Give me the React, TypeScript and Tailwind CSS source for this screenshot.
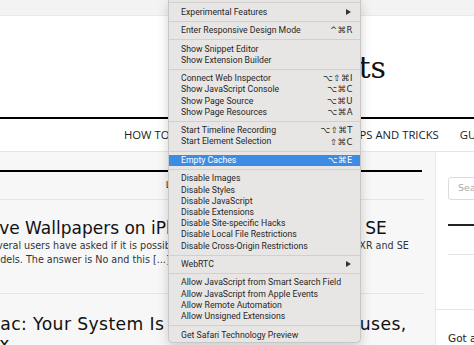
import React from 'react'

type Item = { label: string; keys?: string; arrow?: boolean; active?: boolean } | 'sep'

const menuItems: Item[] = [
    'sep',
    { label: 'Experimental Features', arrow: true },
    'sep',
    { label: 'Enter Responsive Design Mode', keys: '^⌘R' },
    'sep',
    { label: 'Show Snippet Editor' },
    { label: 'Show Extension Builder' },
    'sep',
    { label: 'Connect Web Inspector', keys: '⌥⇧⌘I' },
    { label: 'Show JavaScript Console', keys: '⌥⌘C' },
    { label: 'Show Page Source', keys: '⌥⌘U' },
    { label: 'Show Page Resources', keys: '⌥⌘A' },
    'sep',
    { label: 'Start Timeline Recording', keys: '⌥⇧⌘T' },
    { label: 'Start Element Selection', keys: '⇧⌘C' },
    'sep',
    { label: 'Empty Caches', keys: '⌥⌘E', active: true },
    'sep',
    { label: 'Disable Images' },
    { label: 'Disable Styles' },
    { label: 'Disable JavaScript' },
    { label: 'Disable Extensions' },
    { label: 'Disable Site-specific Hacks' },
    { label: 'Disable Local File Restrictions' },
    { label: 'Disable Cross-Origin Restrictions' },
    'sep',
    { label: 'WebRTC', arrow: true },
    'sep',
    { label: 'Allow JavaScript from Smart Search Field' },
    { label: 'Allow JavaScript from Apple Events' },
    { label: 'Allow Remote Automation' },
    { label: 'Allow Unsigned Extensions' },
    'sep',
    { label: 'Get Safari Technology Preview' },
]

const DevelopMenu = () => (
    <div className="absolute left-[168px] top-[-1px] w-[193px] pb-[2px] bg-[#e8e6e5] border border-t-0 border-[#c9c7c6] rounded-b-[5px] shadow-[0_4px_12px_rgba(0,0,0,0.18)] font-['Roboto','DejaVu_Sans',sans-serif] text-[8.7px] text-[#262626]">
        {menuItems.map((item, i) =>
            item === 'sep' ? (
                <div key={i} className="h-[7.3px] flex items-center">
                    <div className="h-px w-full bg-[#d2d0cf]" />
                </div>
            ) : (
                <div
                    key={i}
                    className={`h-[11.2px] pl-[12px] pr-[7px] flex items-center justify-between leading-none ${item.active ? 'bg-[#3c8ce6] text-white' : ''}`}
                >
                    <span>{item.label}</span>
                    {item.keys && <span className="font-['DejaVu_Sans',sans-serif] text-[8.5px] tracking-[0.5px]">{item.keys}</span>}
                    {item.arrow && (
                        <svg width="5" height="6" viewBox="0 0 5 6" className="mr-[2px]">
                            <path d="M0 0 L5 3 L0 6 Z" fill="#333" />
                        </svg>
                    )}
                </div>
            )
        )}
    </div>
)

const App = () => {
    return (
        <div className="relative w-[474px] h-[345px] overflow-hidden bg-white font-['DejaVu_Sans',sans-serif]">

            <div className="h-[16px] bg-[#f3f3f3] border-b border-[#e9e9e9]" />

            <header className="h-[101px] flex items-center">
                <div className="w-[386px] text-right font-['DejaVu_Serif',serif] text-[30px] text-[#111] pt-[2px]">
                    Mac Experts
                </div>
            </header>

            <div className="h-[2px] bg-black" />

            <nav className="h-[33px] flex items-center gap-[21px] pl-[124px] border-b border-[#e6e6e6] whitespace-nowrap font-['Open_Sans',sans-serif] text-[11.3px] font-medium text-[#1a1a1a]">
                <span>HOW TO</span>
                <span>MAC</span>
                <span>IPHONE</span>
                <span>IPAD</span>
                <span className="ml-[5px]">TIPS AND TRICKS</span>
                <span>GUIDES</span>
            </nav>

            <div className="flex bg-[#f7f7f7] h-[200px]">
                <main className="ml-[-15px] w-[439px] shrink-0 pt-[18px]">
                    <div className="h-[2px] bg-black mr-[2px]" />
                    <div className="h-[28px] flex items-center justify-center border-b border-[#e4e4e4] text-[9px] tracking-[1px] text-[#222]">
                        LATEST POSTS
                    </div>

                    <article className="pt-[19px] pb-[26px] border-b border-[#e4e4e4] whitespace-nowrap">
                        <h2 className="text-[17px] leading-[19px] text-[#111]">Live Wallpapers on iPhone X, XR and iPhone SE</h2>
                        <p className="mt-[1px] text-[9.6px] leading-[14px] text-[#333]">
                            Several users have asked if it is possible to use live wallpapers on the iPhone XR and SE<br />
                            models. The answer is No and this [...]
                        </p>
                    </article>

                    <article className="pt-[20px] whitespace-nowrap">
                        <h2 className="text-[17.2px] leading-[20px] tracking-[0.4px] text-[#111]">
                            Mac: Your System Is Infected With Two Viruses,<br />
                            Fix
                        </h2>
                    </article>
                </main>

                <div className="w-[11px] shrink-0" />

                <aside className="flex-1 bg-white border-l border-[#e8e8e8] pt-[25px]">
                    <div className="pl-[12px]">
                        <div className="h-[23px] w-[60px] border border-[#dcdcdc] rounded-[3px] flex items-center pl-[9px] text-[9.5px] text-[#aaa]">
                            Search
                        </div>
                        <div className="mt-[24px] h-[2px] bg-[#222]" />
                        <div className="h-[29px] border-b border-[#e6e6e6]" />
                    </div>
                    <div className="mt-[54px] border-t border-[#e6e6e6] pl-[12px] pt-[21px] text-[10.5px] text-[#222] whitespace-nowrap">
                        Got a question?
                    </div>
                </aside>
            </div>

            <DevelopMenu />
        </div>
    )
}

export default App
